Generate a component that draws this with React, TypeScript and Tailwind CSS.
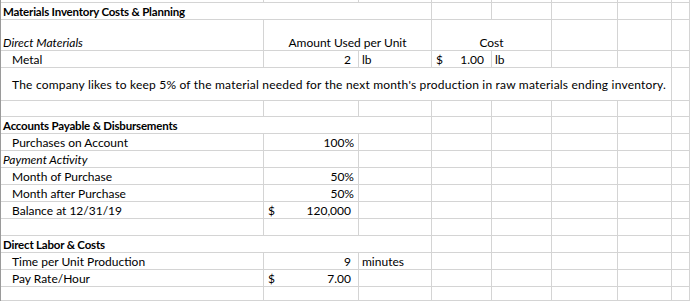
import type { ReactNode } from "react";

type CellProps = {
  span?: string;
  align?: string;
  className?: string;
  children?: ReactNode;
};

function Cell({ span = "", align = "items-end", className = "", children }: CellProps) {
  return (
    <div
      className={`${span} ${align} flex overflow-visible whitespace-nowrap border-b border-r border-[#d4d4d4] ${className}`}
    >
      {children}
    </div>
  );
}

function Blank({ n }: { n: number }) {
  return (
    <>
      {Array.from({ length: n }).map((_, i) => (
        <Cell key={i} />
      ))}
    </>
  );
}

function Money({ value }: { value: string }) {
  return (
    <div className="flex w-full justify-between pl-[4px] pr-[7px]">
      <span>$</span>
      <span>{value}</span>
    </div>
  );
}

const heading = "pl-[2px] text-[11.5px] font-bold tracking-[-0.2px]";

export default function App() {
  return (
    <div className="h-[301px] w-[690px] overflow-hidden bg-white text-[12px] leading-[15px] text-black [font-family:Lato,'Open_Sans',sans-serif]">
      <div className="grid grid-cols-[263px_95px_73px_60px_60px_66px_54px_1fr] border-l border-[#9a9a9a] [grid-template-rows:3px_17px_31px_17px_33px_16px_repeat(10,17px)_14px]">
        {/* row 0 */}
        <Blank n={8} />

        {/* title */}
        <Cell span="col-span-3" className={heading}>
          Materials Inventory Costs &amp; Planning
        </Cell>
        <Blank n={5} />

        {/* direct materials header */}
        <Cell className="pl-[2px] italic">Direct Materials</Cell>
        <Cell span="col-span-2" className="justify-center">
          Amount Used per Unit
        </Cell>
        <Cell span="col-span-2" className="justify-center">
          Cost
        </Cell>
        <Blank n={3} />

        {/* metal */}
        <Cell className="pl-[11px]">Metal</Cell>
        <Cell className="justify-end pr-[7px]">2</Cell>
        <Cell className="pl-[3px]">lb</Cell>
        <Cell>
          <Money value="1.00" />
        </Cell>
        <Cell className="pl-[3px]">lb</Cell>
        <Blank n={3} />

        {/* note */}
        <Cell span="col-span-7" align="items-center" className="pl-[11px] tracking-[0.2px]">
          The company likes to keep 5% of the material needed for the next month's production in raw materials ending inventory.
        </Cell>
        <Cell />

        <Blank n={8} />

        {/* accounts payable */}
        <Cell span="col-span-3" className={heading}>
          Accounts Payable &amp; Disbursements
        </Cell>
        <Blank n={5} />

        <Cell className="pl-[11px]">Purchases on Account</Cell>
        <Cell className="justify-end pr-[4px]">100%</Cell>
        <Blank n={6} />

        <Cell className="pl-[2px] italic">Payment Activity</Cell>
        <Blank n={7} />

        <Cell className="pl-[11px]">Month of Purchase</Cell>
        <Cell className="justify-end pr-[4px]">50%</Cell>
        <Blank n={6} />

        <Cell className="pl-[11px]">Month after Purchase</Cell>
        <Cell className="justify-end pr-[4px]">50%</Cell>
        <Blank n={6} />

        <Cell className="pl-[11px]">Balance at 12/31/19</Cell>
        <Cell>
          <Money value="120,000" />
        </Cell>
        <Blank n={6} />

        <Blank n={8} />

        {/* direct labor */}
        <Cell span="col-span-3" className={heading}>
          Direct Labor &amp; Costs
        </Cell>
        <Blank n={5} />

        <Cell className="pl-[11px]">Time per Unit Production</Cell>
        <Cell className="justify-end pr-[7px]">9</Cell>
        <Cell className="pl-[3px]">minutes</Cell>
        <Blank n={5} />

        <Cell className="pl-[11px]">Pay Rate/Hour</Cell>
        <Cell>
          <Money value="7.00" />
        </Cell>
        <Blank n={6} />

        <Blank n={8} />
      </div>
    </div>
  );
}
